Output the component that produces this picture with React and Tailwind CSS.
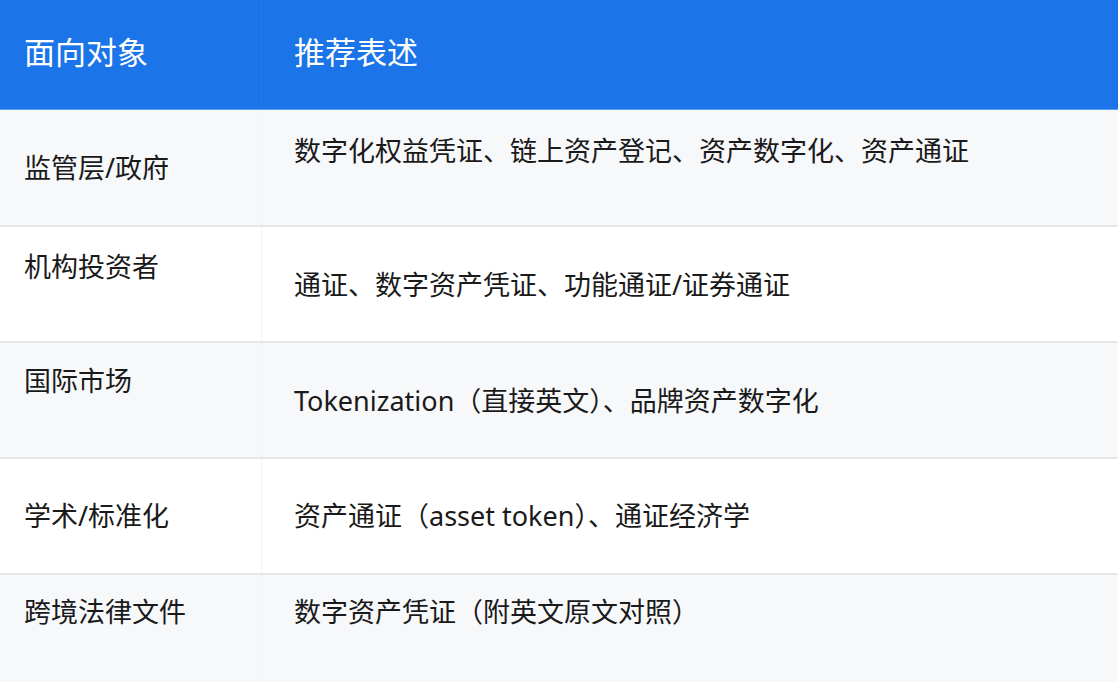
import React from "react";

const ROWS = [
  {
    who: "监管层/政府",
    text: "数字化权益凭证、链上资产登记、资产数字化、资产通证",
    bg: "bg-[#f7f8fa]",
    h: "h-[117px]",
    whoPad: "pt-[38px]",
    textPad: "pt-[21px]",
  },
  {
    who: "机构投资者",
    text: "通证、数字资产凭证、功能通证/证券通证",
    bg: "bg-white",
    h: "h-[116px]",
    whoPad: "pt-[20px]",
    textPad: "pt-[38px]",
  },
  {
    who: "国际市场",
    text: "Tokenization（直接英文）、品牌资产数字化",
    bg: "bg-[#f7f8fa]",
    h: "h-[116px]",
    whoPad: "pt-[18px]",
    textPad: "pt-[38px]",
  },
  {
    who: "学术/标准化",
    text: "资产通证（asset token）、通证经济学",
    bg: "bg-white",
    h: "h-[116px]",
    whoPad: "pt-[37px]",
    textPad: "pt-[37px]",
  },
  {
    who: "跨境法律文件",
    text: "数字资产凭证（附英文原文对照）",
    bg: "bg-[#f7f8fa]",
    h: "h-[117px]",
    whoPad: "pt-[17px]",
    textPad: "pt-[17px]",
  },
];

export default function App() {
  return (
    <div
      className="w-[1118px] h-[682px] overflow-hidden bg-white text-[#1a1a1a]"
      style={{ fontFamily: '"Noto Sans", "Noto Sans CJK SC", sans-serif' }}
    >
      {/* header */}
      <div className="flex h-[110px] bg-[#1b74e8] border-b border-[#5b9cf0] text-white text-[31px]">
        <div className="w-[262px] shrink-0 border-r border-[#2479ea] pl-6 pt-[31px] leading-[42px]">面向对象</div>
        <div className="flex-1 pl-[32px] pt-[31px] leading-[42px]">推荐表述</div>
      </div>

      {ROWS.map((row, i) => (
        <div
          key={i}
          className={`flex ${row.h} ${row.bg} ${i < ROWS.length - 1 ? "border-b-2 border-[#e6e7eb]" : ""} text-[27px] leading-[39px]`}
        >
          <div className={`w-[262px] shrink-0 border-r border-[#f3f4f6] pl-6 ${row.whoPad}`}>{row.who}</div>
          <div className={`flex-1 pl-[32px] ${row.textPad}`}>{row.text}</div>
        </div>
      ))}
    </div>
  );
}
